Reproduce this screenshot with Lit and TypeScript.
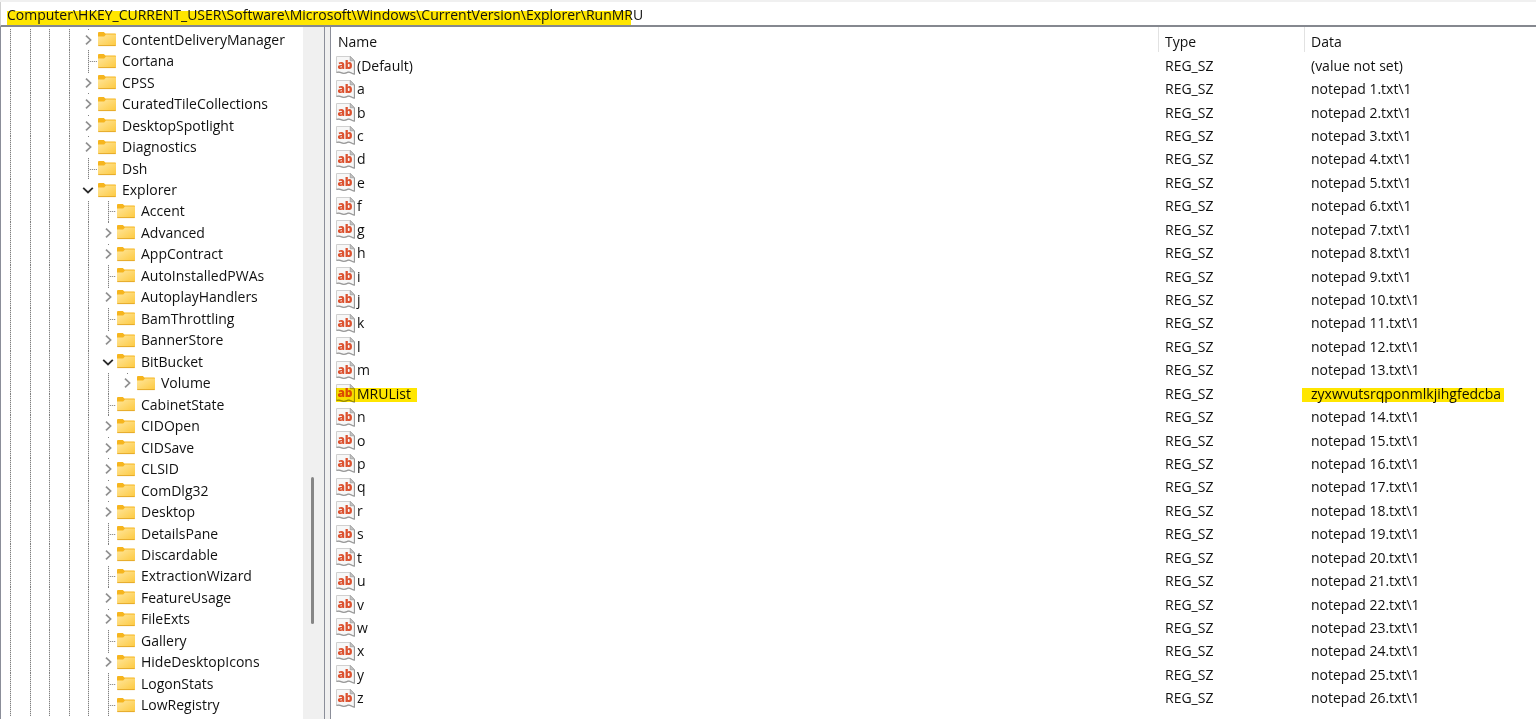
import { LitElement, html, css, svg, nothing } from "lit";
import { customElement, property } from "lit/decorators.js";

const KEY_PATH =
  "Computer\\HKEY_CURRENT_USER\\Software\\Microsoft\\Windows\\CurrentVersion\\Explorer\\RunMRU";

type NodeState = "closed" | "open" | "leaf";
type TreeNode = [name: string, level: number, state: NodeState];

const NODES: TreeNode[] = [
  ["ContentDeliveryManager", 5, "closed"],
  ["Cortana", 5, "leaf"],
  ["CPSS", 5, "closed"],
  ["CuratedTileCollections", 5, "closed"],
  ["DesktopSpotlight", 5, "closed"],
  ["Diagnostics", 5, "closed"],
  ["Dsh", 5, "leaf"],
  ["Explorer", 5, "open"],
  ["Accent", 6, "leaf"],
  ["Advanced", 6, "closed"],
  ["AppContract", 6, "closed"],
  ["AutoInstalledPWAs", 6, "leaf"],
  ["AutoplayHandlers", 6, "closed"],
  ["BamThrottling", 6, "leaf"],
  ["BannerStore", 6, "closed"],
  ["BitBucket", 6, "open"],
  ["Volume", 7, "closed"],
  ["CabinetState", 6, "leaf"],
  ["CIDOpen", 6, "closed"],
  ["CIDSave", 6, "closed"],
  ["CLSID", 6, "closed"],
  ["ComDlg32", 6, "closed"],
  ["Desktop", 6, "closed"],
  ["DetailsPane", 6, "leaf"],
  ["Discardable", 6, "closed"],
  ["ExtractionWizard", 6, "leaf"],
  ["FeatureUsage", 6, "closed"],
  ["FileExts", 6, "closed"],
  ["Gallery", 6, "leaf"],
  ["HideDesktopIcons", 6, "closed"],
  ["LogonStats", 6, "leaf"],
  ["LowRegistry", 6, "leaf"],
];

interface RegValue {
  name: string;
  data: string;
  marked?: boolean;
}

const notepadValue = (letter: string, index: number): RegValue => ({
  name: letter,
  data: `notepad ${index + 1}.txt\\1`,
});
const LETTERS = [..."abcdefghijklmnopqrstuvwxyz"].map(notepadValue);

const VALUES: RegValue[] = [
  { name: "(Default)", data: "(value not set)" },
  ...LETTERS.slice(0, 13),
  { name: "MRUList", data: "zyxwvutsrqponmlkjihgfedcba", marked: true },
  ...LETTERS.slice(13),
];

const folderIcon = html`<svg class="folder" viewBox="0 0 18 15" aria-hidden="true">
  <defs>
    <linearGradient id="front" x1="0" y1="0" x2="1" y2="1">
      <stop offset="0" stop-color="#ffe69c" />
      <stop offset="1" stop-color="#fdc93f" />
    </linearGradient>
  </defs>
  <path d="M0 1Q0 0 1 0H5.8L7.4 1.6H17.2Q18 1.6 18 2.4V7H0Z" fill="#f6b51e" />
  <path d="M0 4.4H6.2L8 2.6H18V13.2Q18 14 17.2 14H.8Q0 14 0 13.2Z" fill="url(#front)" />
  <path d="M0.3 13.6H17.7" stroke="#e2a526" stroke-width="0.9" />
</svg>`;

const stringIcon = html`<svg class="string" viewBox="0 0 19 19" aria-hidden="true">
  <path d="M.5 .5H14.5L18.5 4.5V18C16 18.6 14.6 15.6 12 16.2C9 17.4 8 18.2 5.5 16.8C3.6 15.8 2.4 16.2.5 16.6Z" fill="#f7f7f7" stroke="#d0d0d0" />
  <path d="M14.2 .5V4.8H18.5Z" fill="#c4c4c4" stroke="#959595" stroke-width=".7" />
  <path d="M.5 16.4C2.4 15.9 3.6 15.8 5.5 16.8C8 18.2 9 17.4 12 16.2C14.6 15.6 16 18.2 18.5 18V5" fill="none" stroke="#999" stroke-width="1.3" />
  ${svg`<text x="9" y="13" text-anchor="middle">ab</text>`}
</svg>`;

@customElement("key-tree")
class KeyTree extends LitElement {
  @property({ attribute: false }) nodes: TreeNode[] = [];

  static styles = css`
    :host {
      display: flex;
      min-width: 0;
      background: #fff;
      border: 1px solid #8b8e99;
      border-width: 0 1px;
    }
    .tree {
      flex: 1;
      min-width: 0;
      display: grid;
      grid-auto-rows: minmax(21px, 1fr);
      margin: 0;
      padding: 2px 0 3px;
      list-style: none;
    }
    .node {
      display: flex;
      align-items: center;
      min-width: 0;
    }
    .cell {
      position: relative;
      flex: none;
      align-self: stretch;
      width: 19px;
    }
    .cell:nth-child(odd) {
      width: 20px;
    }
    .guide::before,
    .leaf::before,
    .closed::before {
      content: "";
      position: absolute;
      top: 0;
      left: 9px;
      width: 1px;
      height: 100%;
      background: repeating-linear-gradient(#808080 0 1px, #dcdcdc 1px 2px);
    }
    .closed::before {
      height: 1px;
    }
    .leaf::after {
      content: "";
      position: absolute;
      top: 50%;
      left: 10px;
      right: 2px;
      height: 1px;
      background: repeating-linear-gradient(90deg, #e4e4e4 0 1px, #909090 1px 2px);
    }
    .toggle {
      display: flex;
      align-items: center;
      justify-content: center;
      width: 100%;
      height: 100%;
      padding: 0 2px 0 0;
      border: 0;
      background: none;
    }
    .chevron {
      flex: none;
      width: 12px;
      height: 12px;
      fill: none;
      stroke: #8f8f8f;
      stroke-width: 1.7;
    }
    .open .chevron {
      stroke: #2b2b2b;
      stroke-width: 1.8;
    }
    .folder {
      flex: none;
      width: 18px;
      height: 15px;
      margin: 0 6px 0 -1px;
    }
    .label {
      white-space: nowrap;
      line-height: 20px;
    }
    .scroll {
      flex: none;
      width: 21px;
      display: grid;
      grid-template-rows: 450fr 147fr 95fr;
      background: #f0f0f0;
    }
    .thumb {
      grid-row: 2;
      width: 3px;
      margin-left: 8px;
      border-radius: 2px;
      background: #868686;
    }
  `;

  private expander(name: string, state: NodeState) {
    if (state === "leaf") return nothing;
    const open = state === "open";
    return html`<button class="toggle" aria-label=${name} aria-expanded=${open}>
      <svg class="chevron" viewBox="0 0 12 12" aria-hidden="true">
        <path d=${open ? "M1.2 3.8L6 8.4L10.8 3.8" : "M4 1.6L8.6 6L4 10.4"} />
      </svg>
    </button>`;
  }

  render() {
    return html`
      <ul class="tree" role="tree">
        ${this.nodes.map(
          ([name, level, state]) => html`<li class="node" role="treeitem" aria-level=${level}>
            ${Array.from({ length: level - 1 }, () => html`<span class="cell guide"></span>`)}
            <span class="cell ${state}">${this.expander(name, state)}</span>
            ${folderIcon}
            <span class="label">${name}</span>
          </li>`
        )}
      </ul>
      <div class="scroll"><div class="thumb"></div></div>
    `;
  }
}

@customElement("value-list")
class ValueList extends LitElement {
  @property({ attribute: false }) values: RegValue[] = [];

  static styles = css`
    :host {
      display: grid;
      min-width: 0;
      background: #fff;
      border-left: 1px solid #8b8e99;
    }
    .values {
      display: grid;
      grid-template-rows: 27px 1fr;
      min-width: 0;
      padding-bottom: 9px;
    }
    .body {
      display: grid;
      grid-auto-rows: minmax(23px, 1fr);
    }
    .row {
      display: grid;
      grid-template-columns: minmax(0, 1fr) 146px 232px;
    }
    .head,
    .value {
      display: flex;
      align-items: center;
      padding: 0 0 0 7px;
      font-weight: 400;
      line-height: 20px;
      white-space: nowrap;
    }
    .head {
      padding-top: 5px;
    }
    .head + .head {
      border-left: 1px solid #e2e2e2;
      padding-left: 6px;
    }
    .value.name {
      padding-left: 5px;
    }
    .entry {
      position: relative;
      display: flex;
      align-items: center;
      gap: 2px;
    }
    .marked::after {
      content: "";
      position: absolute;
      inset: 4px -6px 2px 0;
      background: #ffe600;
      mix-blend-mode: multiply;
    }
    .data .marked::after {
      inset: 4px -3px 2px -9px;
    }
    .string {
      flex: none;
      width: 19px;
      height: 19px;
    }
    .string text {
      font: 800 12px "Open Sans", sans-serif;
      fill: #dc5230;
    }
  `;

  render() {
    return html`<table class="values">
      <thead>
        <tr class="row">
          <th class="head" scope="col">Name</th>
          <th class="head" scope="col">Type</th>
          <th class="head" scope="col">Data</th>
        </tr>
      </thead>
      <tbody class="body">
        ${this.values.map(({ name, data, marked }) => {
          const entry = marked ? "entry marked" : "entry";
          return html`<tr class="row">
            <td class="value name"><span class=${entry}>${stringIcon}<span>${name}</span></span></td>
            <td class="value">REG_SZ</td>
            <td class="value data"><span class=${entry}>${data}</span></td>
          </tr>`;
        })}
      </tbody>
    </table>`;
  }
}

@customElement("app-root")
class AppRoot extends LitElement {
  static styles = css`
    :host {
      display: grid;
      grid-template-rows: auto 1fr;
      min-height: 100vh;
      background: #f0f0f0;
      color: #111;
      font: 14px "Open Sans", "Noto Sans", sans-serif;
    }
    .address {
      display: flex;
      margin-top: 2px;
      padding: 0 6px;
      background: #fff;
      border-left: 1px solid #d0d0d0;
      border-bottom: 2px solid #85888f;
    }
    .path {
      flex: 1;
      min-width: 0;
      box-sizing: border-box;
      height: 23px;
      padding: 2px 0 0;
      border: 0;
      outline: 0;
      color: inherit;
      font: inherit;
      background: linear-gradient(#ffe600, #ffe600) 0 9px / 624px 14px no-repeat;
    }
    .panes {
      display: grid;
      grid-template-columns: 325px minmax(0, 1fr);
      gap: 5px;
    }
  `;

  render() {
    return html`
      <div class="address">
        <input class="path" type="text" aria-label="Key path" .value=${KEY_PATH} />
      </div>
      <div class="panes">
        <key-tree .nodes=${NODES}></key-tree>
        <value-list .values=${VALUES}></value-list>
      </div>
    `;
  }
}
